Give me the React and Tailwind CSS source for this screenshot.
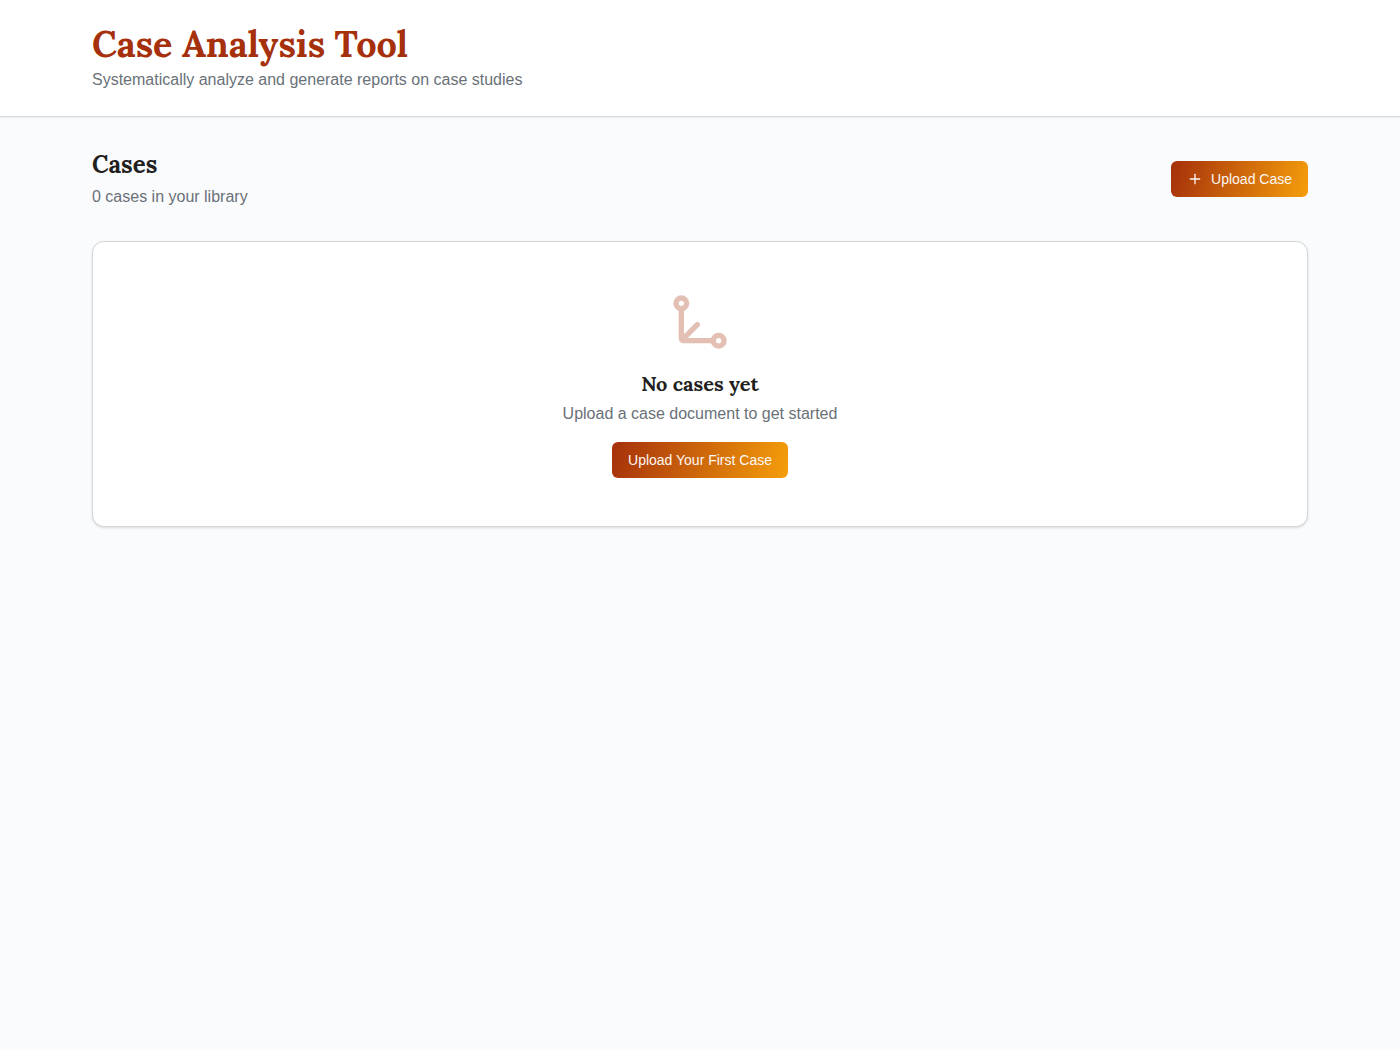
import { Plus, Scale3d } from "lucide-react";

const styles = {
  heading: "font-['Lora','Liberation_Serif',serif] font-bold",
  subText: "mt-1 text-base text-[#6a7178]",
  button:
    "inline-flex h-9 items-center justify-center gap-2 rounded-md bg-linear-[105deg] from-[#a5300b] to-[#f59e0b] px-4 text-sm text-[#fdf8f4] cursor-pointer",
};

const Header = () => (
  <header className="border-b border-[#d3d8da] bg-white shadow-xs">
    <div className="mx-auto max-w-7xl px-8 py-6">
      <h1 className={`${styles.heading} text-4xl text-[#a5300b]`}>
        Case Analysis Tool
      </h1>
      <p className={styles.subText}>
        Systematically analyze and generate reports on case studies
      </p>
    </div>
  </header>
);

const EmptyState = () => (
  <section className="flex flex-col items-center rounded-xl border border-[#d3d8da] bg-white p-12 text-center shadow-sm">
    <Scale3d className="mb-4 size-16 text-[#a5300b] opacity-30" />
    <h3 className={`${styles.heading} text-xl text-[#231f1e]`}>No cases yet</h3>
    <p className={`${styles.subText} mb-4`}>
      Upload a case document to get started
    </p>
    <button type="button" className={styles.button}>
      Upload Your First Case
    </button>
  </section>
);

const App = () => {
  const cases = [];

  return (
    <div className="min-h-screen bg-[#fafbfd] font-['Liberation_Sans',Arial,sans-serif]">
      <Header />
      <main className="mx-auto max-w-7xl px-8 py-8">
        <div className="mb-8 flex items-center justify-between">
          <div>
            <h2 className={`${styles.heading} text-2xl text-[#231f1e]`}>
              Cases
            </h2>
            <p className={styles.subText}>{cases.length} cases in your library</p>
          </div>
          <button type="button" className={styles.button}>
            <Plus className="size-4" />
            Upload Case
          </button>
        </div>
        <EmptyState />
      </main>
    </div>
  );
};

export default App;
